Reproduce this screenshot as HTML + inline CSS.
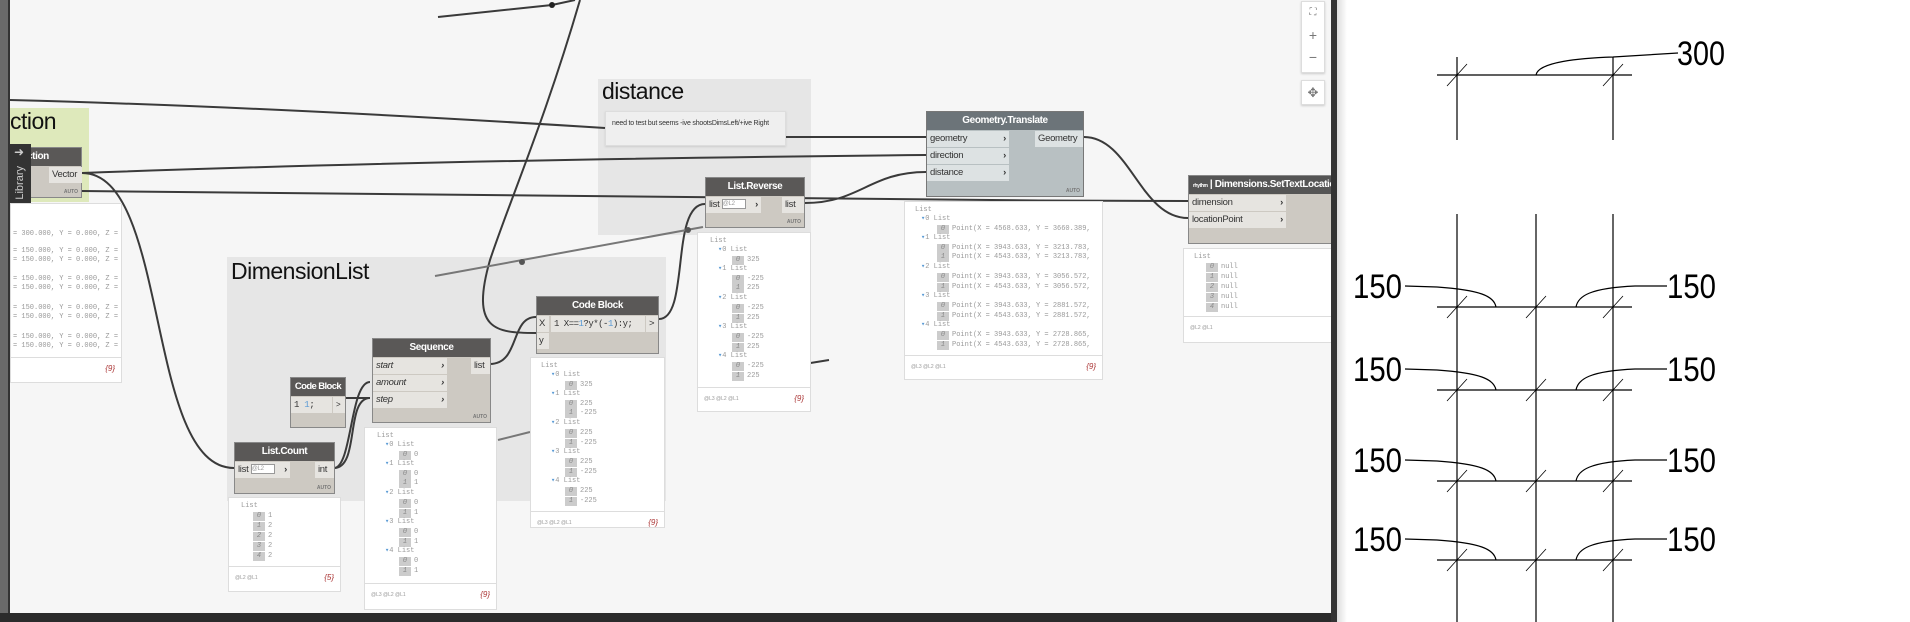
<!DOCTYPE html>
<html><head><meta charset="utf-8">
<style>
*{margin:0;padding:0;box-sizing:border-box}
body{width:1910px;height:622px;overflow:hidden;background:#fff;position:relative;font-family:"Liberation Sans",sans-serif}
.a{position:absolute}
.canvas{left:0;top:0;width:1332px;height:622px;background:#f6f6f6}
.grp{position:absolute;background:#e6e6e6}
.gt{position:absolute;font-size:23px;color:#111;letter-spacing:-0.5px}
.node{position:absolute;background:#cdc9c2;border:1px solid #888}
.hd{background:#5a5857;color:#fff;font-weight:bold;font-size:10px;letter-spacing:-0.4px;text-align:center;height:18px;line-height:18px;white-space:nowrap;overflow:hidden}
.row{position:absolute;background:#e6e4e0;font-size:9.5px;letter-spacing:-0.3px;color:#333;height:16px;line-height:16px;padding-left:3px;white-space:nowrap}
.row b{position:absolute;right:3px;top:0;font-weight:bold;color:#333}
.auto{position:absolute;right:3px;bottom:2px;font-size:5px;font-weight:bold;color:#777}
.w{position:absolute;background:#fff;border:1px solid #ddd;font-family:"Liberation Mono",monospace;font-size:7px;color:#999}
.w .ft{position:absolute;left:0;right:0;border-top:1px solid #ddd;font-size:5px;font-family:"Liberation Sans",sans-serif;padding:8px 6px}
.w .ft i{position:absolute;right:6px;top:6px;font-size:8px;color:#a33;font-style:italic}
.ln{position:absolute;white-space:nowrap;line-height:9px}
.ix{display:inline-block;background:#ccc;color:#888;width:12px;text-align:center;margin-right:3px;font-style:italic}
.bl{color:#5b9bd5}
</style></head><body>
<div class="a canvas"></div>
<div class="a" style="left:0;top:0;width:8px;height:622px;background:#6a6a6a"></div>
<div class="a" style="left:8px;top:0;width:2px;height:622px;background:#333"></div>

<div class="grp" style="left:10px;top:108px;width:79px;height:94px;background:#dee9bb"></div>
<div class="gt" style="left:10px;top:108px">ction</div>
<div class="grp" style="left:598px;top:79px;width:213px;height:156px"></div>
<div class="gt" style="left:602px;top:78px">distance</div>
<div class="a" style="left:605px;top:111px;width:181px;height:35px;background:#efefef;border:1px solid #ddd;box-shadow:0 1px 2px #ccc;font-size:7px;letter-spacing:-0.2px;color:#333;padding:7px 6px;line-height:9px">need to test but seems -ive shootsDimsLeft/+ive Right</div>
<div class="grp" style="left:227px;top:257px;width:439px;height:244px"></div>
<div class="gt" style="left:231px;top:258px">DimensionList</div>

<svg class="a" style="left:0;top:0" width="1332" height="622">
<g fill="none" stroke="#3a3a3a" stroke-width="2">
<path d="M438,17 L552,5 L575,0"/>
<path d="M580,0 C545,120 510,200 490,260 C470,330 495,333 536,333"/>
<path d="M10,100 C200,105 400,115 605,128"/>
<path d="M786,137 L926,137"/>
<path d="M82,173 C300,165 600,158 926,155"/>
<path d="M82,191 C400,197 800,200 1188,201"/>
<path d="M82,173 C170,173 145,468 234,468"/>
<path d="M334,468 C360,468 345,398 370,398"/>
<path d="M334,468 C352,468 350,382 370,382"/>
<path d="M346,398 L370,398"/>
<path d="M490,364 C520,364 510,317 536,317"/>
<path d="M659,319 C690,319 670,204 705,204"/>
<path d="M805,203 C860,203 870,172 926,172"/>
<path d="M1084,137 C1130,137 1140,218 1188,218"/>
<path d="M792,366 L829,360"/>
</g>
<g fill="none" stroke="#777" stroke-width="2">
<path d="M435,276 L703,227"/>
<path d="M498,440 L530,432"/>
</g>
<circle cx="552" cy="5" r="3" fill="#222"/>
<circle cx="522" cy="262" r="3" fill="#555"/>
<circle cx="688" cy="230" r="3" fill="#555"/>
</svg>

<div class="node" style="left:10px;top:147px;width:72px;height:51px">
<div class="hd" style="text-align:left;padding-left:16px">ction</div>
<div class="row" style="left:38px;top:19px;width:33px">Vector</div>
<div class="auto">AUTO</div>
</div>
<div class="a" style="left:10px;top:144px;width:21px;height:74px;background:#333;color:#ccc;font-size:11px">
<div style="position:absolute;left:4px;top:1px;font-size:12px;color:#ccc">➜</div>
<div style="position:absolute;left:3px;top:22px;writing-mode:vertical-rl;transform:rotate(180deg);font-size:11px;line-height:14px">Library</div></div>
<div class="w" style="left:10px;top:203px;width:112px;height:180px">
<div class="ln" style="left:2px;top:26px">= 300.000, Y = 0.000, Z =</div>
<div class="ln" style="left:2px;top:43px">= 150.000, Y = 0.000, Z =</div>
<div class="ln" style="left:2px;top:52px">= 150.000, Y = 0.000, Z =</div>
<div class="ln" style="left:2px;top:71px">= 150.000, Y = 0.000, Z =</div>
<div class="ln" style="left:2px;top:80px">= 150.000, Y = 0.000, Z =</div>
<div class="ln" style="left:2px;top:100px">= 150.000, Y = 0.000, Z =</div>
<div class="ln" style="left:2px;top:109px">= 150.000, Y = 0.000, Z =</div>
<div class="ln" style="left:2px;top:129px">= 150.000, Y = 0.000, Z =</div>
<div class="ln" style="left:2px;top:138px">= 150.000, Y = 0.000, Z =</div>
<div class="ft" style="top:153px"><i>{9}</i></div>
</div>

<div class="node" style="left:926px;top:111px;width:158px;height:86px;background:#b8c0c2;border-color:#777">
<div class="hd" style="background:#6c7479">Geometry.Translate</div>
<div class="row" style="left:0;top:19px;width:82px;background:#dde2e3">geometry<b>›</b></div>
<div class="row" style="left:0;top:36px;width:82px;background:#dde2e3">direction<b>›</b></div>
<div class="row" style="left:0;top:53px;width:82px;background:#dde2e3">distance<b>›</b></div>
<div class="row" style="right:0;top:19px;width:48px;background:#dde2e3">Geometry</div>
<div class="auto">AUTO</div>
</div>
<div class="w" style="left:904px;top:201px;width:199px;height:179px">
<div class="ln" style="left:10px;top:4px">List</div>
<div class="ln" style="left:16px;top:13px"><span class="bl">▾</span>0 List</div>
<div class="ln" style="left:32px;top:23px"><span class="ix">0</span>Point(X = 4568.633, Y = 3660.389,</div>
<div class="ln" style="left:16px;top:32px"><span class="bl">▾</span>1 List</div>
<div class="ln" style="left:32px;top:42px"><span class="ix">0</span>Point(X = 3943.633, Y = 3213.783,</div>
<div class="ln" style="left:32px;top:51px"><span class="ix">1</span>Point(X = 4543.633, Y = 3213.783,</div>
<div class="ln" style="left:16px;top:61px"><span class="bl">▾</span>2 List</div>
<div class="ln" style="left:32px;top:71px"><span class="ix">0</span>Point(X = 3943.633, Y = 3056.572,</div>
<div class="ln" style="left:32px;top:81px"><span class="ix">1</span>Point(X = 4543.633, Y = 3056.572,</div>
<div class="ln" style="left:16px;top:90px"><span class="bl">▾</span>3 List</div>
<div class="ln" style="left:32px;top:100px"><span class="ix">0</span>Point(X = 3943.633, Y = 2881.572,</div>
<div class="ln" style="left:32px;top:110px"><span class="ix">1</span>Point(X = 4543.633, Y = 2881.572,</div>
<div class="ln" style="left:16px;top:119px"><span class="bl">▾</span>4 List</div>
<div class="ln" style="left:32px;top:129px"><span class="ix">0</span>Point(X = 3943.633, Y = 2728.865,</div>
<div class="ln" style="left:32px;top:139px"><span class="ix">1</span>Point(X = 4543.633, Y = 2728.865,</div>
<div class="ft" style="top:153px">@L3 @L2 @L1<i>{9}</i></div>
</div>

<div class="node" style="left:1188px;top:175px;width:146px;height:69px">
<div class="hd" style="text-align:left;padding-left:4px;background:#555"><span style="font-size:5px">rhythm</span> | Dimensions.SetTextLocation</div>
<div class="row" style="left:0;top:19px;width:97px">dimension<b>›</b></div>
<div class="row" style="left:0;top:36px;width:97px">locationPoint<b>›</b></div>
</div>
<div class="w" style="left:1183px;top:248px;width:149px;height:95px">
<div class="ln" style="left:10px;top:4px">List</div>
<div class="ln" style="left:22px;top:14px"><span class="ix">0</span>null</div>
<div class="ln" style="left:22px;top:24px"><span class="ix">1</span>null</div>
<div class="ln" style="left:22px;top:34px"><span class="ix">2</span>null</div>
<div class="ln" style="left:22px;top:44px"><span class="ix">3</span>null</div>
<div class="ln" style="left:22px;top:54px"><span class="ix">4</span>null</div>
<div class="ft" style="top:67px">@L2 @L1</div>
</div>

<div class="node" style="left:705px;top:177px;width:100px;height:51px">
<div class="hd">List.Reverse</div>
<div class="row" style="left:0;top:19px;width:55px">list <span style="display:inline-block;width:24px;height:10px;border:1px solid #999;background:#fff;font-size:6px;line-height:8px;color:#999;vertical-align:middle">@L2</span><b>›</b></div>
<div class="row" style="right:0;top:19px;width:22px">list</div>
<div class="auto">AUTO</div>
</div>
<div class="w" style="left:697px;top:232px;width:114px;height:180px">
<div class="ln" style="left:12px;top:4px">List</div>
<div class="ln" style="left:20px;top:13px"><span class="bl">▾</span>0 List</div>
<div class="ln" style="left:34px;top:23px"><span class="ix">0</span>325</div>
<div class="ln" style="left:20px;top:32px"><span class="bl">▾</span>1 List</div>
<div class="ln" style="left:34px;top:42px"><span class="ix">0</span>-225</div>
<div class="ln" style="left:34px;top:51px"><span class="ix">1</span>225</div>
<div class="ln" style="left:20px;top:61px"><span class="bl">▾</span>2 List</div>
<div class="ln" style="left:34px;top:71px"><span class="ix">0</span>-225</div>
<div class="ln" style="left:34px;top:81px"><span class="ix">1</span>225</div>
<div class="ln" style="left:20px;top:90px"><span class="bl">▾</span>3 List</div>
<div class="ln" style="left:34px;top:100px"><span class="ix">0</span>-225</div>
<div class="ln" style="left:34px;top:110px"><span class="ix">1</span>225</div>
<div class="ln" style="left:20px;top:119px"><span class="bl">▾</span>4 List</div>
<div class="ln" style="left:34px;top:129px"><span class="ix">0</span>-225</div>
<div class="ln" style="left:34px;top:139px"><span class="ix">1</span>225</div>
<div class="ft" style="top:154px">@L3 @L2 @L1<i>{9}</i></div>
</div>

<div class="node" style="left:536px;top:296px;width:123px;height:58px">
<div class="hd">Code Block</div>
<div class="row" style="left:0;top:19px;width:12px;padding-left:2px">X</div>
<div class="row" style="left:0;top:36px;width:12px;padding-left:2px">y</div>
<div class="row" style="left:14px;top:19px;width:94px;font-family:'Liberation Mono',monospace;font-size:9px;letter-spacing:-0.5px">1 X==<span class="bl">1</span>?y*(-<span class="bl">1</span>):y;</div>
<div class="row" style="right:0;top:19px;width:12px">&gt;</div>
</div>
<div class="w" style="left:530px;top:357px;width:135px;height:171px">
<div class="ln" style="left:10px;top:4px">List</div>
<div class="ln" style="left:20px;top:13px"><span class="bl">▾</span>0 List</div>
<div class="ln" style="left:34px;top:23px"><span class="ix">0</span>325</div>
<div class="ln" style="left:20px;top:32px"><span class="bl">▾</span>1 List</div>
<div class="ln" style="left:34px;top:42px"><span class="ix">0</span>225</div>
<div class="ln" style="left:34px;top:51px"><span class="ix">1</span>-225</div>
<div class="ln" style="left:20px;top:61px"><span class="bl">▾</span>2 List</div>
<div class="ln" style="left:34px;top:71px"><span class="ix">0</span>225</div>
<div class="ln" style="left:34px;top:81px"><span class="ix">1</span>-225</div>
<div class="ln" style="left:20px;top:90px"><span class="bl">▾</span>3 List</div>
<div class="ln" style="left:34px;top:100px"><span class="ix">0</span>225</div>
<div class="ln" style="left:34px;top:110px"><span class="ix">1</span>-225</div>
<div class="ln" style="left:20px;top:119px"><span class="bl">▾</span>4 List</div>
<div class="ln" style="left:34px;top:129px"><span class="ix">0</span>225</div>
<div class="ln" style="left:34px;top:139px"><span class="ix">1</span>-225</div>
<div class="ft" style="top:153px">@L3 @L2 @L1<i>{9}</i></div>
</div>

<div class="node" style="left:372px;top:338px;width:119px;height:85px">
<div class="hd">Sequence</div>
<div class="row" style="left:0;top:19px;width:74px;font-style:italic">start<b>›</b></div>
<div class="row" style="left:0;top:36px;width:74px;font-style:italic">amount<b>›</b></div>
<div class="row" style="left:0;top:53px;width:74px;font-style:italic">step<b>›</b></div>
<div class="row" style="right:0;top:19px;width:19px">list</div>
<div class="auto">AUTO</div>
</div>
<div class="w" style="left:364px;top:427px;width:133px;height:183px">
<div class="ln" style="left:12px;top:4px">List</div>
<div class="ln" style="left:20px;top:13px"><span class="bl">▾</span>0 List</div>
<div class="ln" style="left:34px;top:23px"><span class="ix">0</span>0</div>
<div class="ln" style="left:20px;top:32px"><span class="bl">▾</span>1 List</div>
<div class="ln" style="left:34px;top:42px"><span class="ix">0</span>0</div>
<div class="ln" style="left:34px;top:51px"><span class="ix">1</span>1</div>
<div class="ln" style="left:20px;top:61px"><span class="bl">▾</span>2 List</div>
<div class="ln" style="left:34px;top:71px"><span class="ix">0</span>0</div>
<div class="ln" style="left:34px;top:81px"><span class="ix">1</span>1</div>
<div class="ln" style="left:20px;top:90px"><span class="bl">▾</span>3 List</div>
<div class="ln" style="left:34px;top:100px"><span class="ix">0</span>0</div>
<div class="ln" style="left:34px;top:110px"><span class="ix">1</span>1</div>
<div class="ln" style="left:20px;top:119px"><span class="bl">▾</span>4 List</div>
<div class="ln" style="left:34px;top:129px"><span class="ix">0</span>0</div>
<div class="ln" style="left:34px;top:139px"><span class="ix">1</span>1</div>
<div class="ft" style="top:155px">@L3 @L2 @L1<i>{9}</i></div>
</div>

<div class="node" style="left:290px;top:377px;width:56px;height:51px">
<div class="hd" style="font-size:9.5px;letter-spacing:-0.6px">Code Block</div>
<div class="row" style="left:0;top:19px;width:41px;font-family:'Liberation Mono',monospace;font-size:9px">1 <span class="bl">1</span>;</div>
<div class="row" style="right:0;top:19px;width:12px;font-size:8px">&gt;</div>
</div>

<div class="node" style="left:234px;top:442px;width:101px;height:52px">
<div class="hd">List.Count</div>
<div class="row" style="left:0;top:19px;width:55px">list <span style="display:inline-block;width:24px;height:10px;border:1px solid #999;background:#fff;font-size:6px;line-height:8px;color:#999;vertical-align:middle">@L2</span><b>›</b></div>
<div class="row" style="right:0;top:19px;width:19px">int</div>
<div class="auto">AUTO</div>
</div>
<div class="w" style="left:228px;top:497px;width:113px;height:95px">
<div class="ln" style="left:12px;top:4px">List</div>
<div class="ln" style="left:24px;top:14px"><span class="ix">0</span>1</div>
<div class="ln" style="left:24px;top:24px"><span class="ix">1</span>2</div>
<div class="ln" style="left:24px;top:34px"><span class="ix">2</span>2</div>
<div class="ln" style="left:24px;top:44px"><span class="ix">3</span>2</div>
<div class="ln" style="left:24px;top:54px"><span class="ix">4</span>2</div>
<div class="ft" style="top:68px">@L2 @L1<i>{5}</i></div>
</div>

<div class="a" style="left:1301px;top:1px;width:24px;height:72px;background:#fff;border:1px solid #ddd;box-shadow:0 1px 2px #ccc;color:#777;text-align:center;font-size:14px;line-height:22px">
<div style="font-size:10px">⛶</div><div>+</div><div>−</div></div>
<div class="a" style="left:1301px;top:80px;width:24px;height:25px;background:#fff;border:1px solid #ddd;box-shadow:0 1px 2px #ccc;color:#777;text-align:center;font-size:13px;line-height:24px">✥</div>

<div class="a" style="left:0;top:613px;width:1332px;height:9px;background:#2b2b2b"></div>
<div class="a" style="left:1331px;top:0;width:6px;height:622px;background:#333"></div>
<div class="a" style="left:1337px;top:0;width:10px;height:622px;background:linear-gradient(90deg,#ddd,#fff)"></div>

<svg class="a" style="left:1337px;top:0" width="573" height="622" font-family="Liberation Sans, sans-serif">
<g transform="translate(-1337,0)" fill="none" stroke="#000" stroke-width="1.2">
<path d="M1437,75 H1632 M1457,57 V140 M1613,57 V140"/>
<path d="M1447,86 L1467,64 M1603,86 L1623,64" stroke-width="0.8"/>
<path d="M1536,75 C1538,62 1580,58 1613,57 L1678,53"/>
<path d="M1457,214 V622 M1536,214 V622 M1613,214 V622"/>
<g id="r">
<path d="M1437,307 H1632"/>
<path d="M1447,318 L1467,296 M1526,318 L1546,296 M1603,318 L1623,296" stroke-width="0.8"/>
<path d="M1405,286 L1437,287 C1480,290 1494,296 1496,307"/>
<path d="M1667,286 L1635,286 C1590,288 1578,296 1576,307"/>
</g>
<use href="#r" transform="translate(0,83)"/>
<use href="#r" transform="translate(0,174)"/>
<use href="#r" transform="translate(0,253)"/>
</g>
<g fill="#000" font-size="34" transform="translate(-1337,0)">
<text x="1677" y="65" textLength="48" lengthAdjust="spacingAndGlyphs">300</text>
<text x="1353" y="298" textLength="49" lengthAdjust="spacingAndGlyphs">150</text>
<text x="1667" y="298" textLength="49" lengthAdjust="spacingAndGlyphs">150</text>
<text x="1353" y="381" textLength="49" lengthAdjust="spacingAndGlyphs">150</text>
<text x="1667" y="381" textLength="49" lengthAdjust="spacingAndGlyphs">150</text>
<text x="1353" y="472" textLength="49" lengthAdjust="spacingAndGlyphs">150</text>
<text x="1667" y="472" textLength="49" lengthAdjust="spacingAndGlyphs">150</text>
<text x="1353" y="551" textLength="49" lengthAdjust="spacingAndGlyphs">150</text>
<text x="1667" y="551" textLength="49" lengthAdjust="spacingAndGlyphs">150</text>
</g>
</svg>
</body></html>
